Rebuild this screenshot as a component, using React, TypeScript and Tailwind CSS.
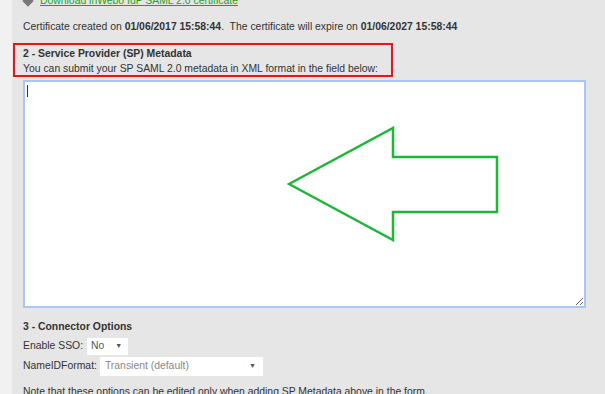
export default function App() {
  const font = { fontFamily: '"Liberation Sans", Arial, sans-serif' };
  return (
    <div className="flex h-[394px] w-full overflow-hidden text-[10.4px] text-[#333]" style={font}>
      <div className="w-[12px] shrink-0 bg-[#f1f1f1]" />
      <div className="flex-1 bg-[#e6e6e6] pl-[11px]">
        <div className="-mt-[7px] flex h-[15px] items-center gap-[6px]">
          <span className="ml-[1px] inline-block h-[8px] w-[8px] rotate-45 bg-[#777]" />
          <a className="ml-[2px] text-[#17a317] underline">Download inWebo IdP SAML 2.0 certificate</a>
        </div>
        <div className="mt-[12px] h-[14px] leading-[14px]">
          Certificate created on <b>01/06/2017 15:58:44</b>.&nbsp; The certificate will expire on{" "}
          <b>01/06/2027 15:58:44</b>
        </div>
        <div className="-ml-[10px] mt-[9px] h-[34px] w-[380px] whitespace-nowrap border-2 border-[#e8141c] pl-[8px] pt-[1px] leading-[15px]">
          <div className="font-bold">2 - Service Provider (SP) Metadata</div>
          <div>You can submit your SP SAML 2.0 metadata in XML format in the field below:</div>
        </div>
        <div className="relative mt-[3px] h-[228px] w-[563px]">
          <textarea
            className="h-full w-full resize border-2 border-[#a9c6f4] bg-white px-[2px] py-[1px] text-[11px] outline-none"
            style={font}
            defaultValue=""
          />
          <span className="absolute left-[4px] top-[5px] h-[12px] w-px bg-[#333]" />
          <svg
            className="pointer-events-none absolute left-[264px] top-[46px]"
            width="212"
            height="116"
            viewBox="0 0 212 116"
          >
            <polygon
              points="2,58 106,2 106,31 210,31 210,86 106,86 106,114"
              fill="none"
              stroke="#1fb53b"
              strokeWidth="2.5"
              strokeLinejoin="miter"
            />
          </svg>
        </div>
        <div className="mt-[12px] h-[14px] font-bold leading-[14px]">3 - Connector Options</div>
        <div className="mt-[3px] flex h-[18px] items-center gap-[4px]">
          <span>Enable SSO:</span>
          <div className="flex h-[17px] w-[41px] items-center justify-between bg-white pl-[4px] pr-[6px] text-[#555]">
            <span>No</span>
            <span className="text-[7px]">▼</span>
          </div>
        </div>
        <div className="mt-[1px] flex h-[20px] items-center gap-[3px]">
          <span>NameIDFormat:</span>
          <div className="flex h-[19px] w-[163px] items-center justify-between bg-white pl-[5px] pr-[7px] text-[#888]">
            <span>Transient (default)</span>
            <span className="text-[7px] text-[#555]">▼</span>
          </div>
        </div>
        <div className="mt-[9px] leading-[14px]">
          Note that these options can be edited only when adding SP Metadata above in the form.
        </div>
      </div>
    </div>
  );
}
